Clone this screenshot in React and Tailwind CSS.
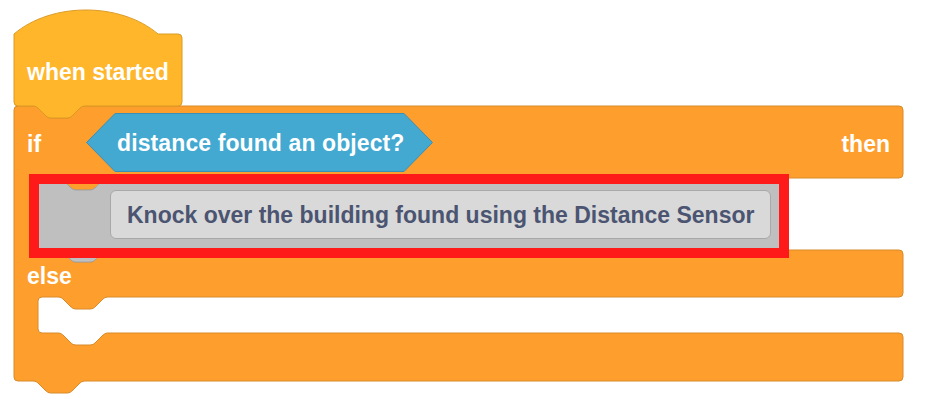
import React from "react";

const notchRight = "c3,0 4.5,1.5 6,3 l6,6 c1.5,1.5 3,3 6,3 h14 c3,0 4.5,-1.5 6,-3 l6,-6 c1.5,-1.5 3,-3 6,-3";
const notchLeft = "c-3,0 -4.5,1.5 -6,3 l-6,6 c-1.5,1.5 -3,3 -6,3 h-14 c-3,0 -4.5,-1.5 -6,-3 l-6,-6 c-1.5,-1.5 -3,-3 -6,-3";
const tabRight = "c3,0 4.5,1.5 6,3 l6,6 c1.5,1.5 3,3 6,3 h16 c3,0 4.5,-1.5 6,-3 l6,-6 c1.5,-1.5 3,-3 6,-3";
const tabLeft = "c-3,0 -4.5,1.5 -6,3 l-6,6 c-1.5,1.5 -3,3 -6,3 h-16 c-3,0 -4.5,-1.5 -6,-3 l-6,-6 c-1.5,-1.5 -3,-3 -6,-3";

const hatPath = `M0,24 C37.5,-8 106.5,-8 144,24 H164 Q168,24 168,28 V92 Q168,96 164,96 H71 ${tabLeft} H4 Q0,96 0,92 Z`;

const ifElsePath = [
  "M0,4 Q0,0 4,0 H19",
  tabRight,
  "H885 Q889,0 889,4 V68 Q889,72 885,72 H94",
  notchLeft,
  "H28 Q24,72 24,76 V140 Q24,144 28,144 H44",
  notchRight,
  "H885 Q889,144 889,148 V187 Q889,191 885,191 H94",
  notchLeft,
  "H28 Q24,191 24,195 V223 Q24,227 28,227 H44",
  notchRight,
  "H885 Q889,227 889,231 V271 Q889,275 885,275 H71",
  tabLeft,
  "H4 Q0,275 0,271 Z",
].join(" ");

const commentPath = `M0,4 Q0,0 4,0 H20 ${notchRight} H738 Q742,0 742,4 V68 Q742,72 738,72 H70 ${notchLeft} H4 Q0,72 0,68 Z`;

function HatBlock() {
  return (
    <div className="relative z-10 h-[96px] w-[168px]">
      <svg className="absolute left-0 top-0 overflow-visible" width="168" height="108" viewBox="0 0 168 108">
        <path d={hatPath} fill="#ffb62b" stroke="#dc9a22" strokeWidth="1" />
      </svg>
      <div className="relative flex h-full flex-col pt-[24px]">
        <div className="flex h-[72px] items-center pl-[13px] pt-[4px] text-white">when started</div>
      </div>
    </div>
  );
}

function Condition() {
  return (
    <div className="relative ml-[45px] mt-[1px] flex h-[59px] w-[347px] items-center pl-[31px] pt-[2px]">
      <svg className="absolute left-0 top-0 overflow-visible" width="347" height="59" viewBox="0 0 347 59">
        <path d="M29,0.5 H318 L346.5,29.5 L318,58.5 H29 L0.5,29.5 Z" fill="#43a9d1" stroke="#3a8fb6" strokeWidth="1" />
      </svg>
      <span className="relative tracking-[0.1px] text-white">distance found an object?</span>
    </div>
  );
}

function CommentBlock() {
  return (
    <div className="relative h-[72px] w-[742px]">
      <svg className="absolute left-0 top-0 overflow-visible" width="742" height="84" viewBox="0 0 742 84">
        <path d={commentPath} fill="#bfbfbf" stroke="#a3a3a3" strokeWidth="1" />
      </svg>
      <div className="relative pl-[72px] pt-[12px]">
        <div className="flex h-[49px] w-[661px] items-center rounded-[6px] border border-[#a8a8a8] bg-[#d9d9d9] pl-[16px] pt-[1px] text-[#4b5471]">
          Knock over the building found using the Distance Sensor
        </div>
      </div>
    </div>
  );
}

function IfElseBlock() {
  return (
    <div className="relative h-[275px] w-[889px]">
      <svg className="absolute left-0 top-0 overflow-visible" width="889" height="288" viewBox="0 0 889 288">
        <path d={ifElsePath} fill="#fe9f2d" stroke="#d98a28" strokeWidth="1" />
      </svg>
      <div className="relative flex h-full flex-col text-white">
        <div className="flex h-[72px] items-center pl-[13px]">
          <span className="pt-[4px]">if</span>
          <Condition />
          <div className="flex-1" />
          <span className="pr-[13px] pt-[4px]">then</span>
        </div>
        <div className="h-[72px] pl-[24px]">
          <CommentBlock />
        </div>
        <div className="flex h-[47px] items-center pl-[13px] pt-[5px]">else</div>
        <div className="h-[36px]" />
        <div className="h-[48px]" />
      </div>
    </div>
  );
}

export default function App() {
  return (
    <div className="relative h-[417px] w-[928px] overflow-hidden bg-white font-['Liberation_Sans',Arial,sans-serif] text-[23px] font-bold leading-none">
      <div className="flex flex-col pl-[14px] pt-[10px]">
        <HatBlock />
        <IfElseBlock />
      </div>
      <div className="pointer-events-none absolute left-[29px] top-[174px] h-[84px] w-[760px] border-[10px] border-[#ff1a1a]" />
    </div>
  );
}
